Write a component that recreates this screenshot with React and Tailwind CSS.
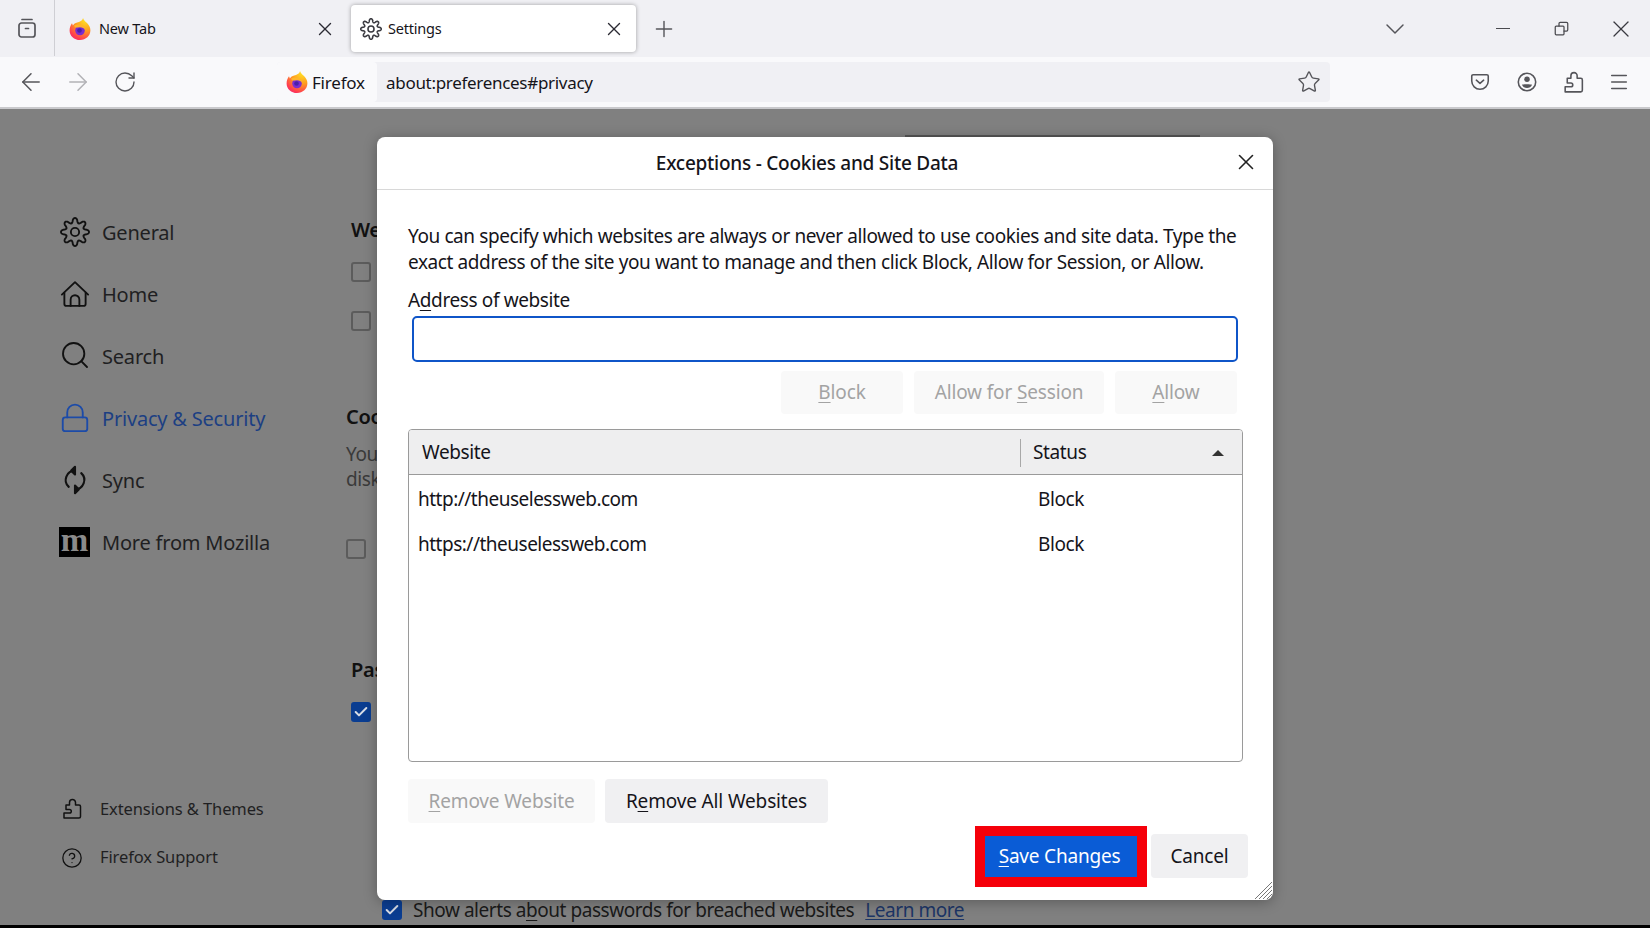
import React from "react";
import { ArrowLeft, ArrowRight, RotateCw, X, Plus, ChevronDown, Star, Search, Menu, CircleHelp, Check } from "lucide-react";

function FirefoxLogo({ id, className }) {
  return (
    <svg viewBox="0 0 24 24" className={className}>
      <defs>
        <radialGradient id={id + "a"} cx="0.75" cy="0.1" r="1.1">
          <stop offset="0" stopColor="#ffe226" />
          <stop offset="0.45" stopColor="#ff9a1f" />
          <stop offset="0.8" stopColor="#ff3d50" />
          <stop offset="1" stopColor="#f01f7a" />
        </radialGradient>
      </defs>
      <path d="M15 1c.6 2.4 2.4 3.4 4 5 2.2 2.2 3.4 4.600 3.400 7.300C22.400 18.900 17.800 23 12 23S1.600 18.800 1.600 13.400c0-2.800 1-5.400 2.400-7.100l.9 2.200C5.800 6.900 7.300 5.700 9.200 5.400 11.500 4.900 14.600 3.900 15 1z" fill={`url(#${id}a)`} />
      <circle cx="12" cy="13.500" r="4.800" fill="#7b2ccf" />
      <circle cx="11.500" cy="13.500" r="2.300" fill="#4a1fa8" />
      <path d="M6 8.500c2.500-1.200 5.500-1.500 8-.3 1.800 1 3 2.800 3.200 4.800-1.300-2-3.300-3-5.700-2.800-2.500.2-4.600 1.200-5.500-1.700z" fill="#ffb52b" />
    </svg>
  );
}

const Ico = ({ children, className = "w-5 h-5", sw = "1.700" }) => (
  <svg viewBox="0 0 24 24" fill="none" stroke="currentColor" strokeWidth={sw} strokeLinecap="round" strokeLinejoin="round" className={className}>
    {children}
  </svg>
);

const gearPath = (() => {
  const pts = [];
  for (let i = 0; i < 240; i++) {
    const t = (i / 240) * Math.PI * 2;
    const c = Math.cos(8 * t);
    const r = 9.3 + 1.9 * Math.sign(c) * Math.pow(Math.abs(c), 0.7);
    pts.push((12 + r * Math.cos(t)).toFixed(2) + " " + (12 + r * Math.sin(t)).toFixed(2));
  }
  return "M" + pts.join("L") + "Z";
})();

const Gear = ({ className, sw = "1.500" }) => (
  <Ico className={className} sw={sw}>
    <path d={gearPath} />
    <circle cx="12" cy="12" r="3.300" />
  </Ico>
);

const PuzzleIcon = ({ className, sw = "1.700" }) => (
  <Ico className={className} sw={sw}>
    <path d="M4 21H19A1.500 1.500 0 0 0 20.500 19.500V9.500A1.500 1.500 0 0 0 19 8H15.500V5.500a3 3 0 0 0-6 0V8H6v4.500h3.500a1.800 1.800 0 0 1 0 3.600H4z" />
  </Ico>
);

function Tool({ children, className = "" }) {
  return <div className={"flex items-center justify-center w-[47px] h-full text-[#55555a] " + className}>{children}</div>;
}

function NavRow({ icon, children, active }) {
  return (
    <div className={"flex items-center h-[62px] " + (active ? "text-[#1c3f83]" : "text-[#1f1f22]")}>
      <div className="w-[42px] flex items-center shrink-0">{icon}</div>
      <span className="text-[20px] tracking-[-0.2px] leading-none mt-[2px]">{children}</span>
    </div>
  );
}

function Box({ checked, className = "" }) {
  return (
    <div className={"w-5 h-5 rounded-[3px] shrink-0 flex items-center justify-center " + (checked ? "bg-[#0a3d91] " : "border-2 border-[#5c5c5c] ") + className}>
      {checked && <Check className="w-4 h-4 text-[#d8dde6]" strokeWidth={3} />}
    </div>
  );
}

function DlgBtn({ w, h = "h-[43px]", disabled, children }) {
  return (
    <div className={"flex items-center justify-center rounded-[4px] text-[19px] tracking-[-0.15px] leading-none " + w + " " + h + " " + (disabled ? "bg-[#f9f9f9] text-[#a3a3a3]" : "bg-[#f0f0f2] text-[#15141a]")}>
      <span>{children}</span>
    </div>
  );
}

const U = ({ children }) => <span className="underline decoration-1 underline-offset-[3px]">{children}</span>;

export default function App() {
  return (
    <div className="w-[1650px] h-[928px] overflow-hidden flex flex-col bg-black font-['Noto_Sans','Open_Sans',sans-serif] text-[#15141a]">
      {/* Tab bar */}
      <div className="h-[57px] bg-[#f0f0f4] flex items-center shrink-0">
        <div className="w-[55px] h-[56px] self-start border-r border-[#cfcfd4] flex items-center justify-center text-[#55555a]">
          <Ico className="w-[24px] h-[24px]">
            <path d="M7 3.500h10" />
            <rect x="4" y="7" width="16" height="14" rx="2.500" />
            <path d="M10.500 12.500h3" />
          </Ico>
        </div>
        <div className="w-[296px] h-[46px] flex items-center pl-[13px] pr-[15px]">
          <FirefoxLogo id="fa" className="w-[24px] h-[24px] mr-[7px]" />
          <span className="text-[14.500px] tracking-[-0.2px] flex-1">New Tab</span>
          <X className="w-[22px] h-[22px] text-[#2b2a33]" strokeWidth={1.500} />
        </div>
        <div className="w-[285px] h-[47px] bg-white rounded-[4px] shadow-[0_0_4px_rgba(0,0,0,0.35)] flex items-center pl-[9px] pr-[11px]">
          <Gear className="w-[22px] h-[22px] mr-[6px] text-[#3a3a40]" sw="1.700" />
          <span className="text-[14.500px] tracking-[-0.2px] flex-1">Settings</span>
          <X className="w-[22px] h-[22px] text-[#2b2a33]" strokeWidth={1.500} />
        </div>
        <div className="w-[56px] flex justify-center text-[#55555a]">
          <Plus className="w-[26px] h-[26px]" strokeWidth={1.300} />
        </div>
        <div className="flex-1" />
        <ChevronDown className="w-[32px] h-[32px] text-[#55555a] mr-[85px]" strokeWidth={1.100} />
        <div className="w-[14px] h-[1.500px] bg-[#4a4a4f] mr-[43.500px]" />
        <Ico className="w-[15px] h-[15px] text-[#4a4a4f] mr-[38.500px]" sw="2">
          <rect x="2" y="8" width="14" height="14" rx="1.500" />
          <path d="M8 8V4a2 2 0 0 1 2-2h10a2 2 0 0 1 2 2v10a2 2 0 0 1-2 2h-4" />
        </Ico>
        <X className="w-[28px] h-[28px] text-[#3a3a40] mr-[15px]" strokeWidth={1.100} />
      </div>

      {/* Toolbar */}
      <div className="h-[52px] bg-[#f9f9fb] border-b-2 border-[#c9c9cc] flex items-center shrink-0">
        <div className="w-[7px]" />
        <Tool><ArrowLeft className="w-[28px] h-[28px]" strokeWidth={1.300} /></Tool>
        <Tool className="text-[#b2b2b6]"><ArrowRight className="w-[28px] h-[28px]" strokeWidth={1.300} /></Tool>
        <Tool><RotateCw className="w-[24px] h-[24px]" strokeWidth={1.400} /></Tool>
        <div className="ml-[129px] w-[1053px] h-[40px] self-start mt-[5px] bg-[#f0f0f4] rounded-[4px] flex items-center">
          <div className="w-[100px] h-full bg-[#f9f9fb] flex items-center pl-[8px] rounded-[4px]">
            <FirefoxLogo id="fb" className="w-[24px] h-[24px] mr-[3px]" />
            <span className="text-[17px] tracking-[-0.2px] mt-[1px]">Firefox</span>
          </div>
          <span className="ml-[9px] text-[17px] tracking-[-0.3px] flex-1 mt-[1px]">about:preferences#privacy</span>
          <Star className="w-[24px] h-[24px] text-[#55555a] mr-[9px]" strokeWidth={1.400} />
        </div>
        <div className="ml-[127px] flex h-full">
          <Tool className="!w-[46px]">
            <Ico className="w-[22px] h-[22px]">
              <path d="M4.500 4h15A1.500 1.500 0 0 1 21 5.500V11a9 9 0 0 1-18 0V5.500A1.500 1.500 0 0 1 4.500 4z" />
              <path d="M8 10l4 3.500 4-3.500" />
            </Ico>
          </Tool>
          <Tool className="!w-[47px]">
            <svg viewBox="0 0 24 24" className="w-[22px] h-[22px]" fill="none">
              <circle cx="12" cy="12" r="9.500" stroke="currentColor" strokeWidth="1.700" />
              <circle cx="12" cy="9" r="3" fill="currentColor" />
              <path d="M6.500 15c1.500-.8 9.500-.8 11 0-1 2.500-3 3.500-5.500 3.500S7.500 17.500 6.500 15z" fill="currentColor" />
            </svg>
          </Tool>
          <Tool className="!w-[47px]"><PuzzleIcon className="w-[25px] h-[25px]" sw="1.500" /></Tool>
          <Tool className="!w-[43px]"><Menu className="w-[22px] h-[22px]" strokeWidth={1.600} /></Tool>
        </div>
      </div>

      {/* Page */}
      <div className="relative h-[816px] bg-[#808080] flex shrink-0 overflow-hidden">
        <aside className="w-[346px] shrink-0 pl-[60px] pt-[92px] pb-[43px] flex flex-col justify-between">
          <div>
            <NavRow icon={<Gear className="w-[30px] h-[30px] text-[#111]" />}>General</NavRow>
            <NavRow icon={
              <Ico className="w-[30px] h-[30px] text-[#111]" sw="1.500">
                <path d="M1.500 12.500L12 2.500l10.500 10" />
                <path d="M3.500 11v9A1.500 1.500 0 0 0 5 21.500h14a1.500 1.500 0 0 0 1.500-1.500v-9" />
                <path d="M8.500 21.500v-5a3.500 3.500 0 0 1 7 0v5" />
              </Ico>
            }>Home</NavRow>
            <NavRow icon={<Search className="w-[32px] h-[32px] -ml-[1px] -mt-[2px] text-[#111]" strokeWidth={1.400} />}>Search</NavRow>
            <NavRow active icon={
              <Ico className="w-[30px] h-[30px] text-[#1c4ba8]" sw="1.500">
                <rect x="2.200" y="11.500" width="19.600" height="11" rx="2" />
                <path d="M5.800 11.500V7.500a6.200 6.200 0 0 1 12.400 0v4" />
              </Ico>
            }>Privacy &amp; Security</NavRow>
            <NavRow icon={
              <Ico className="w-[30px] h-[30px] text-[#111]">
                <path d="M12 4.500a7.500 7.500 0 0 0-5 13" />
                <path d="M12 19.500a7.500 7.500 0 0 0 5-13" />
                <path d="M12 1.500l-3 3 3 3z" fill="currentColor" />
                <path d="M12 22.500l3-3-3-3z" fill="currentColor" />
              </Ico>
            }>Sync</NavRow>
            <NavRow icon={
              <div className="w-[31px] h-[30px] -ml-[1px] bg-black flex items-center justify-center">
                <span className="font-['Liberation_Serif',serif] font-bold text-[33px] leading-[30px] text-[#8a8a8a] -mt-[4px]">m</span>
              </div>
            }>More from Mozilla</NavRow>
          </div>
          <div className="text-[#1f1f22] text-[16.500px] tracking-[-0.1px]">
            <div className="h-[49px] flex items-center pt-[1px]">
              <PuzzleIcon className="w-[24px] h-[24px] mr-[16px] text-[#111]" sw="1.500" />
              <span>Extensions &amp; Themes</span>
            </div>
            <div className="h-[49px] flex items-center">
              <CircleHelp className="w-[22px] h-[22px] ml-[1px] mr-[17px] text-[#111]" strokeWidth={1.400} />
              <span>Firefox Support</span>
            </div>
          </div>
        </aside>

        <main className="flex-1 min-w-0 whitespace-nowrap">
          <div className="mt-[26px] ml-[559px] w-[295px] h-[2px] bg-[#555]" />
          <h2 className="mt-[80px] ml-[5px] h-[26px] leading-[26px] text-[20px] tracking-[-0.3px] font-semibold text-[#111]">Website Advertising Preferences</h2>
          <Box className="mt-[19px] ml-[5px]" />
          <Box className="mt-[29px] ml-[5px]" />
          <h2 className="mt-[73px] h-[26px] leading-[26px] text-[20px] tracking-[-0.3px] font-semibold text-[#111]">Cookies and Site Data</h2>
          <p className="mt-[12px] text-[19px] tracking-[-0.38px] leading-[25px] text-[#3a3a3a]">Your stored cookies, site data,<br />disk space</p>
          <Box className="mt-[47px]" />
          <h2 className="mt-[98px] ml-[5px] h-[26px] leading-[26px] text-[20px] tracking-[-0.3px] font-semibold text-[#111]">Passwords</h2>
          <Box checked className="mt-[19px] ml-[5px]" />
          <div className="mt-[178px] ml-[36px] flex items-center gap-[11px] h-[20px] text-[19px] tracking-[-0.45px] text-[#1a1a1a]">
            <Box checked />
            <span>Show alerts a<U>b</U>out passwords for breached websites</span>
            <span className="text-[#1c3566] underline underline-offset-2">Learn more</span>
          </div>
        </main>

        {/* Dialog */}
        <div className="absolute left-[377px] top-[28px] w-[896px] h-[763px] bg-white rounded-[8px] shadow-[0_2px_14px_rgba(0,0,0,0.3)] flex flex-col overflow-hidden">
          <div className="relative h-[53px] shrink-0 border-b border-[#d8d8d8] flex items-center justify-center">
            <span className="text-[19px] tracking-[-0.25px] font-medium -ml-[36px]">Exceptions - Cookies and Site Data</span>
            <X className="absolute right-[14px] top-[12px] w-[26px] h-[26px] text-[#222]" strokeWidth={1.500} />
          </div>
          <div className="flex-1 flex flex-col pl-[31px] pr-[25px] relative">
            <p className="mt-[33px] text-[19px] tracking-[-0.4px] leading-[26px] w-[840px]">You can specify which websites are always or never allowed to use cookies and site data. Type the exact address of the site you want to manage and then click Block, Allow for Session, or Allow.</p>
            <div className="mt-[12px] text-[19px] tracking-[-0.38px] leading-[26px]">A<U>d</U>dress of website</div>
            <div className="mt-[3px] ml-[4px] w-[826px] h-[46px] border-[2.500px] border-[#0f55c8] rounded-[5px]" />
            <div className="mt-[9px] w-[829px] flex justify-end gap-[11px]">
              <DlgBtn disabled w="w-[122px]"><U>B</U>lock</DlgBtn>
              <DlgBtn disabled w="w-[190px]">Allow for <U>S</U>ession</DlgBtn>
              <DlgBtn disabled w="w-[122px]"><U>A</U>llow</DlgBtn>
            </div>
            <div className="mt-[15px] w-[835px] h-[333px] border border-[#9a9a9a] rounded-[4px] overflow-hidden flex flex-col text-[19px] tracking-[-0.38px]">
              <div className="h-[45px] shrink-0 bg-[#eeeeef] border-b border-[#9a9a9a] flex items-center mb-[2px] pt-[1px]">
                <div className="w-[612px] pl-[13px] border-r border-[#a8a8a8] h-[28px] flex items-center">Website</div>
                <div className="flex-1 pl-[12px] pr-[18px] flex items-center justify-between">
                  <span>Status</span>
                  <div className="w-0 h-0 border-l-[6px] border-r-[6px] border-b-[6px] border-l-transparent border-r-transparent border-b-[#333]" />
                </div>
              </div>
              <div className="flex h-[45px] items-center pl-[9px]"><span className="w-[620px] tracking-[-0.5px]">http://theuselessweb.com</span><span>Block</span></div>
              <div className="flex h-[45px] items-center pl-[9px]"><span className="w-[620px] tracking-[-0.5px]">https://theuselessweb.com</span><span>Block</span></div>
            </div>
            <div className="mt-[17px] flex gap-[10px]">
              <DlgBtn disabled w="w-[187px]" h="h-[44px]"><U>R</U>emove Website</DlgBtn>
              <DlgBtn w="w-[223px]" h="h-[44px]">R<U>e</U>move All Websites</DlgBtn>
            </div>
            <div className="mt-[3px] flex items-start gap-[4px] justify-end w-[840px]">
              <div className="w-[172px] h-[61px] border-[10px] border-[#f5000a] bg-[#0a5cd6] flex items-center justify-center pr-[3px] text-[19px] tracking-[-0.2px] text-white">
                <span><U>S</U>ave Changes</span>
              </div>
              <div className="mt-[8px]"><DlgBtn w="w-[97px]" h="h-[44px]">Cancel</DlgBtn></div>
            </div>
            <svg viewBox="0 0 20 20" className="absolute right-0 bottom-0 w-[20px] h-[20px] text-[#777]" stroke="currentColor" strokeWidth="1">
              <path d="M19 2L2 19M19 6L6 19M19 10L10 19M19 14L14 19" />
            </svg>
          </div>
        </div>
      </div>
    </div>
  );
}
